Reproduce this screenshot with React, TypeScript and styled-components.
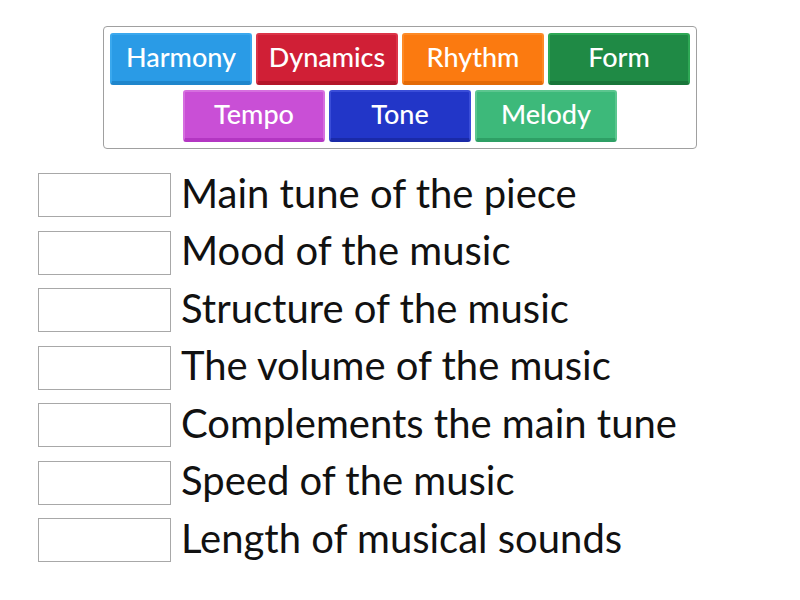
import React from "react";
import styled, { createGlobalStyle } from "styled-components";

const Global = createGlobalStyle`
  html, body { margin: 0; padding: 0; background: #fff; }
  body { font-family: "Lato", "Noto Sans", sans-serif; }
`;

const Page = styled.div`
  width: 800px;
  height: 600px;
  display: flex;
  flex-direction: column;
  align-items: center;
  padding-top: 26px;
  box-sizing: border-box;
`;

const Bank = styled.div`
  width: 594px;
  box-sizing: border-box;
  border: 1px solid #a0a0a0;
  border-radius: 4px;
  padding: 6px 6px 6px 6px;
  display: flex;
  flex-wrap: wrap;
  justify-content: center;
  gap: 5px 4px;
`;

const Tile = styled.div<{ $c: string; $light: string; $dark: string }>`
  width: 142px;
  height: 52px;
  box-sizing: border-box;
  border-radius: 3px;
  background: ${(p) => p.$c};
  border-top: 2px solid ${(p) => p.$light};
  border-left: 2px solid ${(p) => p.$light};
  border-right: 2px solid ${(p) => p.$light};
  border-bottom: 4px solid ${(p) => p.$dark};
  color: #fff;
  font-size: 27px;
  font-weight: 500;
  display: flex;
  align-items: center;
  justify-content: center;
  padding-bottom: 4px;
`;

const List = styled.div`
  align-self: flex-start;
  margin-left: 38px;
  margin-top: 24px;
  display: flex;
  flex-direction: column;
  gap: 13.5px;
`;

const Row = styled.div`
  display: flex;
  align-items: center;
  gap: 10px;
`;

const Slot = styled.div`
  width: 133px;
  height: 44px;
  box-sizing: border-box;
  border: 1px solid #a8a8a8;
  background: #fff;
`;

const Label = styled.div`
  font-size: 40px;
  color: #111;
  line-height: 44px;
  margin-top: -5px;
`;

const tiles = [
  { t: "Harmony", c: "#2a9be6", l: "#3aa8ee", d: "#1f86cc" },
  { t: "Dynamics", c: "#d01f36", l: "#dc3448", d: "#b41629" },
  { t: "Rhythm", c: "#fb7a10", l: "#fd8a26", d: "#e36a06" },
  { t: "Form", c: "#1f8a45", l: "#2ea855", d: "#19763a" },
  { t: "Tempo", c: "#c94fd6", l: "#d66fdf", d: "#b336c2" },
  { t: "Tone", c: "#2236c8", l: "#3a4dd8", d: "#1a2aa8" },
  { t: "Melody", c: "#3db97a", l: "#5cc68f", d: "#2e9f65" },
];

const items = [
  "Main tune of the piece",
  "Mood of the music",
  "Structure of the music",
  "The volume of the music",
  "Complements the main tune",
  "Speed of the music",
  "Length of musical sounds",
];

export default function App() {
  return (
    <>
      <Global />
      <Page>
        <Bank>
          {tiles.map((x) => (
            <Tile key={x.t} $c={x.c} $light={x.l} $dark={x.d}>
              {x.t}
            </Tile>
          ))}
        </Bank>
        <List>
          {items.map((s) => (
            <Row key={s}>
              <Slot />
              <Label>{s}</Label>
            </Row>
          ))}
        </List>
      </Page>
    </>
  );
}
